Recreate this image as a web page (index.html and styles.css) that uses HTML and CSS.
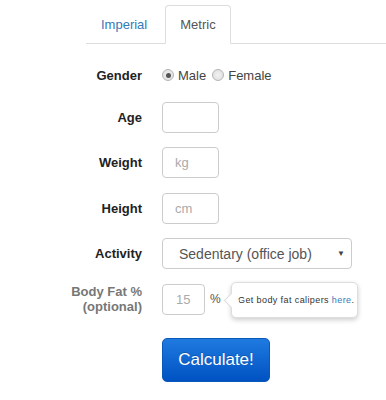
FILE: index.html
```html
<!DOCTYPE html>
<html>
<head>
<meta charset="utf-8">
<link rel="stylesheet" href="styles.css">
</head>
<body>
<div class="page">
  <ul class="tabs">
    <li class="tab"><a class="tab-link">Imperial</a></li>
    <li class="tab active"><a class="tab-link">Metric</a></li>
  </ul>
  <form class="form">
    <div class="row row-gender">
      <div class="label">Gender</div>
      <div class="control radios">
        <label class="radio"><span class="dot checked"></span>Male</label>
        <label class="radio"><span class="dot"></span>Female</label>
      </div>
    </div>
    <div class="row">
      <div class="label">Age</div>
      <div class="control"><div class="input"></div></div>
    </div>
    <div class="row">
      <div class="label">Weight</div>
      <div class="control"><div class="input placeholder">kg</div></div>
    </div>
    <div class="row">
      <div class="label">Height</div>
      <div class="control"><div class="input placeholder">cm</div></div>
    </div>
    <div class="row">
      <div class="label">Activity</div>
      <div class="control">
        <div class="select"><span>Sedentary (office job)</span><span class="caret">▼</span></div>
      </div>
    </div>
    <div class="row row-fat">
      <div class="label muted">Body Fat %<br>(optional)</div>
      <div class="control fat">
        <div class="input small placeholder">15</div>
        <span class="pct">%</span>
        <div class="tip"><span>Get body fat calipers <span class="link">here</span>.</span></div>
      </div>
    </div>
    <div class="row row-btn">
      <div class="label"></div>
      <div class="control"><div class="btn">Calculate!</div></div>
    </div>
  </form>
</div>
</body>
</html>
```
FILE: styles.css
```css
html, body {
  margin: 0;
  padding: 0;
  background: #fff;
  font-family: "Liberation Sans", Arial, sans-serif;
  color: #333;
}
.page {
  width: 386px;
  height: 400px;
  overflow: hidden;
}
.tabs {
  list-style: none;
  margin: 5px 0 0 86px;
  padding: 0;
  display: flex;
  border-bottom: 1px solid #ddd;
  height: 38px;
}
.tab {
  margin-right: 3px;
  margin-bottom: -1px;
}
.tab-link {
  display: block;
  padding: 10px 14px;
  line-height: 17px;
  font-size: 13px;
  color: #337ab7;
  border: 1px solid transparent;
  border-radius: 4px 4px 0 0;
}
.tab.active .tab-link {
  color: #555;
  background: #fff;
  border-color: #ddd;
  border-bottom-color: #fff;
}
.form {
  display: flex;
  flex-direction: column;
  gap: 14.5px;
  padding-top: 20px;
}
.row {
  display: flex;
  align-items: center;
  gap: 20px;
  min-height: 31px;
}
.row-gender {
  min-height: 22px;
  margin-bottom: 1px;
}
.label {
  width: 142px;
  flex: none;
  text-align: right;
  font-weight: bold;
  font-size: 13px;
  color: #222;
  line-height: 15px;
}
.label.muted {
  color: #777;
}
.control {
  display: flex;
  align-items: center;
}
.radios {
  gap: 6px;
  font-size: 13px;
  color: #444;
}
.radio {
  display: flex;
  align-items: center;
  gap: 4px;
}
.dot {
  width: 10px;
  height: 10px;
  border-radius: 50%;
  border: 1px solid #b5b5b5;
  background: radial-gradient(circle, #f2f2f2 0, #dcdcdc 100%);
  position: relative;
}
.dot.checked::after {
  content: "";
  position: absolute;
  left: 2.5px;
  top: 2.5px;
  width: 5px;
  height: 5px;
  border-radius: 50%;
  background: #555;
}
.input {
  box-sizing: border-box;
  width: 57px;
  height: 31px;
  border: 1px solid #ccc;
  border-radius: 4px;
  font-size: 13px;
  color: #aaa;
  padding: 0 12px;
  line-height: 29px;
}
.input.small {
  width: 43px;
  padding: 0 13px;
}
.select {
  box-sizing: border-box;
  width: 190px;
  height: 31px;
  border: 1px solid #ccc;
  border-radius: 4px;
  display: flex;
  align-items: center;
  justify-content: space-between;
  padding: 0 6px 0 16px;
  font-size: 14px;
  color: #555;
}
.caret {
  font-size: 8px;
  color: #444;
}
.fat {
  position: relative;
}
.pct {
  font-size: 12px;
  color: #555;
  margin-left: 5px;
}
.tip {
  position: absolute;
  left: 69px;
  top: -2px;
  width: 127px;
  height: 36px;
  box-sizing: border-box;
  background: #fff;
  border: 1px solid #ddd;
  border-radius: 5px;
  box-shadow: 0 2px 5px rgba(0, 0, 0, 0.2);
  font-size: 9px;
  letter-spacing: 0.4px;
  color: #333;
  display: flex;
  align-items: center;
  padding-left: 6px;
  white-space: nowrap;
}
.tip::before {
  content: "";
  position: absolute;
  left: -6px;
  top: 12px;
  width: 10px;
  height: 10px;
  background: #fff;
  border-left: 1px solid #ddd;
  border-bottom: 1px solid #ddd;
  transform: rotate(45deg);
}
.link {
  color: #337ab7;
}
.row-btn {
  margin-top: 9px;
}
.btn {
  width: 108px;
  height: 44px;
  border-radius: 5px;
  background: linear-gradient(#1f7ae0, #0052c2);
  border: 1px solid #0a58b8;
  box-sizing: border-box;
  color: #fff;
  font-size: 17px;
  display: flex;
  align-items: center;
  justify-content: center;
  text-shadow: 0 -1px 0 rgba(0,0,0,0.2);
}
```
